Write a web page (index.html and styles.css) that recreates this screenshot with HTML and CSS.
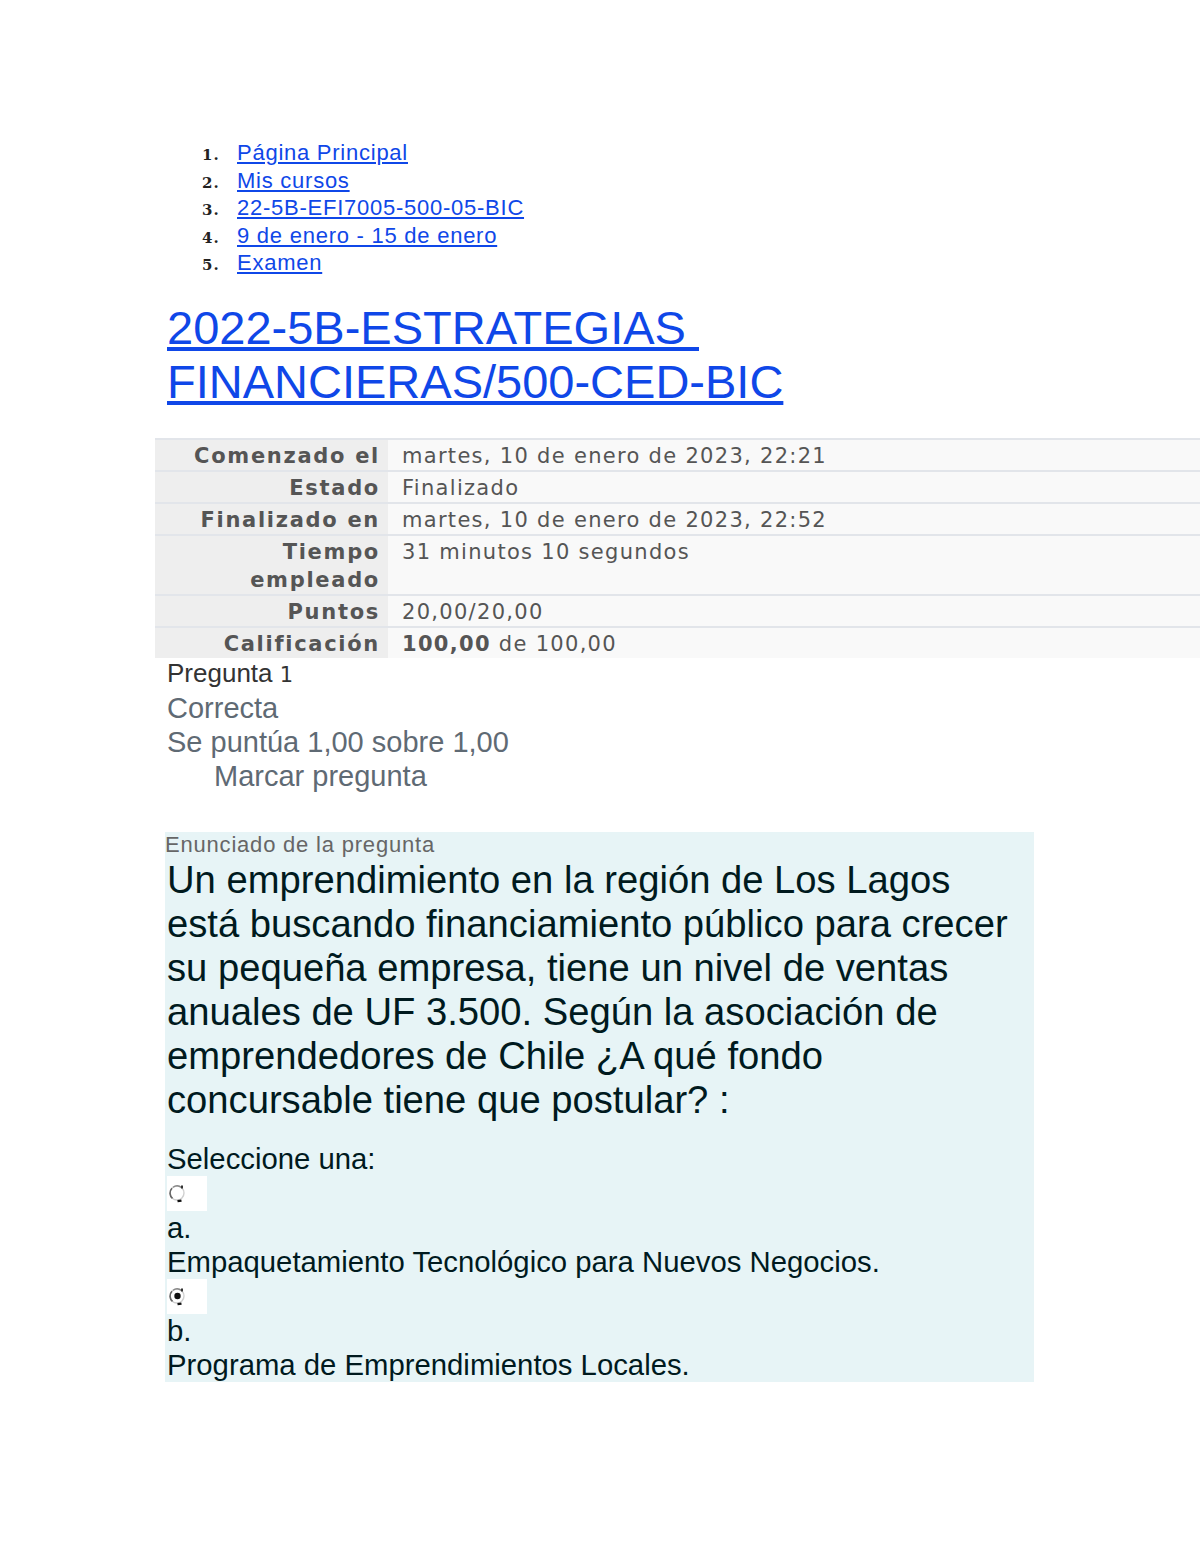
FILE: index.html
```html
<!DOCTYPE html>
<html lang="es">
<head>
  <meta charset="UTF-8" />
  <title>Examen - 2022-5B-ESTRATEGIAS FINANCIERAS</title>
  <link rel="stylesheet" href="styles.css">
</head>
<body>
  <ol class="crumbs">
    <li><a>Página Principal</a></li>
    <li><a>Mis cursos</a></li>
    <li><a>22-5B-EFI7005-500-05-BIC</a></li>
    <li><a>9 de enero - 15 de enero</a></li>
    <li><a>Examen</a></li>
  </ol>

  <h1 class="course"><a>2022-5B-ESTRATEGIAS&nbsp;<br>FINANCIERAS/500-CED-BIC</a></h1>

  <table class="summary">
    <tr><th>Comenzado el</th><td>martes, 10 de enero de 2023, 22:21</td></tr>
    <tr><th>Estado</th><td>Finalizado</td></tr>
    <tr><th>Finalizado en</th><td>martes, 10 de enero de 2023, 22:52</td></tr>
    <tr><th>Tiempo<br>empleado</th><td>31 minutos 10 segundos</td></tr>
    <tr><th>Puntos</th><td>20,00/20,00</td></tr>
    <tr><th>Calificación</th><td><b>100,00</b> de 100,00</td></tr>
  </table>

  <div class="qinfo">
    <div class="qno">Pregunta <span class="num">1</span></div>
    <div class="state">Correcta</div>
    <div class="grade">Se puntúa 1,00 sobre 1,00</div>
    <div class="flag">Marcar pregunta</div>
  </div>

  <div class="qtext-box">
    <div class="label">Enunciado de la pregunta</div>
    <p class="qtext">Un emprendimiento en la región de Los Lagos está buscando financiamiento público para crecer su pequeña empresa, tiene un nivel de ventas anuales de UF 3.500. Según la asociación de emprendedores de Chile ¿A qué fondo concursable tiene que postular? :</p>
    <div class="prompt">Seleccione una:</div>
    <div class="answer">
      <div class="radio">
        <svg width="20" height="22" viewBox="0 0 20 22">
          <circle cx="9" cy="11" r="7" fill="none" stroke="#d0d0d0" stroke-width="1.4"/>
          <path d="M4 6.2 A7 7 0 0 0 4.5 16.4" fill="none" stroke="#666" stroke-width="1.6"/>
          <path d="M5 5.3 A7 7 0 0 1 13.5 5.4" fill="none" stroke="#888" stroke-width="1.3"/>
          <path d="M14 3.5 L14 6.5" stroke="#333" stroke-width="2"/>
          <path d="M9.5 19.2 L13.5 18.6" stroke="#111" stroke-width="2.2"/>
        </svg>
      </div>
      <div class="letter">a.</div>
      <div class="opt">Empaquetamiento Tecnológico para Nuevos Negocios.</div>
      <div class="radio">
        <svg width="20" height="22" viewBox="0 0 20 22">
          <circle cx="9" cy="11" r="7" fill="none" stroke="#d0d0d0" stroke-width="1.4"/>
          <path d="M4 6.2 A7 7 0 0 0 4.5 16.4" fill="none" stroke="#666" stroke-width="1.6"/>
          <path d="M5 5.3 A7 7 0 0 1 13.5 5.4" fill="none" stroke="#888" stroke-width="1.3"/>
          <path d="M14 3.5 L14 6.5" stroke="#333" stroke-width="2"/>
          <path d="M9.5 19.2 L13.5 18.6" stroke="#111" stroke-width="2.2"/>
          <circle cx="9.5" cy="11" r="3.2" fill="#111"/>
        </svg>
      </div>
      <div class="letter">b.</div>
      <div class="opt">Programa de Emprendimientos Locales.</div>
    </div>
  </div>
</body>
</html>
```

FILE: styles.css
```css
body {
  margin: 0;
  font-family: "Liberation Sans", Arial, sans-serif;
  background: #fff;
  color: #333;
  overflow-x: hidden;
}
a {
  color: #0f47e8;
  text-decoration: underline;
}
.crumbs {
  margin: 0;
  padding: 139px 0 0 237px;
  list-style: none;
  counter-reset: crumb;
  font-size: 22px;
  letter-spacing: 0.75px;
  line-height: 27.5px;
}
.crumbs li {
  counter-increment: crumb;
  height: 27.5px;
}
.crumbs li::before {
  content: counter(crumb) ".";
  display: inline-block;
  width: 35px;
  margin-left: -35px;
  font-family: "DejaVu Serif", serif;
  font-weight: bold;
  font-size: 15px;
  line-height: 1;
  letter-spacing: 1px;
  color: #222;
}
.course {
  margin: 24px 0 0 167px;
  font-size: 47px;
  font-weight: normal;
  line-height: 54px;
}
.summary {
  margin: 29px 0 0 155px;
  width: 1060px;
  border-collapse: collapse;
  font-family: "DejaVu Sans", sans-serif;
  font-size: 21px;
  letter-spacing: 1.3px;
  line-height: 28px;
  color: #555;
  border-top: 2px solid #e2e5ea;
}
.summary th, .summary td {
  border-bottom: 2px solid #e2e5ea;
  padding: 2px 10px 0 14px;
  vertical-align: top;
}
.summary th {
  width: 211px;
  text-align: right;
  background: #eeeeee;
  font-weight: bold;
  letter-spacing: 1.7px;
  padding-right: 8px;
}
.summary td {
  background: #f9f9f9;
  text-align: left;
}
.summary tr:last-child th, .summary tr:last-child td {
  border-bottom: none;
}
.qinfo {
  padding-left: 167px;
  color: #5f6a74;
}
.qno {
  font-size: 26px;
  line-height: 31px;
  color: #333;
}
.qno .num {
  font-family: "DejaVu Sans", sans-serif;
  font-size: 21px;
  letter-spacing: 1px;
}
.state, .grade, .flag {
  font-size: 29px;
  line-height: 34px;
}
.flag {
  padding-left: 47px;
}
.qtext-box {
  margin: 39px 0 0 165px;
  width: 869px;
  background: #e7f4f6;
  color: #001a1e;
}
.label {
  font-size: 22px;
  letter-spacing: 0.8px;
  line-height: 26px;
  color: #666;
}
.qtext {
  margin: 0;
  padding: 0 20px 0 2px;
  font-size: 38.2px;
  line-height: 44px;
}
.prompt {
  margin-top: 20px;
  padding-left: 2px;
  font-size: 29.3px;
  line-height: 34px;
}
.answer {
  padding-left: 2px;
  font-size: 29.3px;
  line-height: 34px;
}
.radio {
  width: 40px;
  height: 35px;
  background: #fff;
  display: flex;
  align-items: center;
  padding-left: 1px;
  box-sizing: border-box;
}
```
